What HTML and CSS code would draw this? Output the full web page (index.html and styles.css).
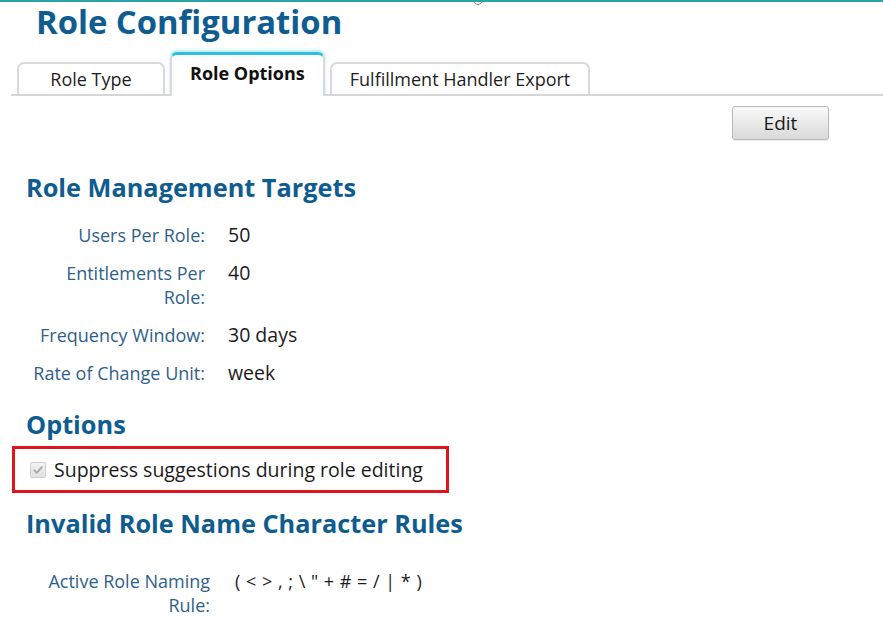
FILE: index.html
```html
<!DOCTYPE html>
<html lang="en">
<head>
<meta charset="utf-8">
<title>Role Configuration</title>
<link rel="stylesheet" href="styles.css">
</head>
<body>
<div class="page">
  <span class="top-knob"></span>
  <h1 class="title">Role Configuration</h1>

  <div class="tabs">
    <div class="tab">Role Type</div>
    <div class="tab tab-active">Role Options</div>
    <div class="tab">Fulfillment Handler Export</div>
  </div>

  <div class="actions">
    <button class="btn" type="button">Edit</button>
  </div>

  <h2 class="section-title">Role Management Targets</h2>
  <div class="props">
    <div class="prop-label">Users Per Role:</div>
    <div class="prop-value">50</div>
    <div class="prop-label">Entitlements Per Role:</div>
    <div class="prop-value">40</div>
    <div class="prop-label">Frequency Window:</div>
    <div class="prop-value">30 days</div>
    <div class="prop-label">Rate of Change Unit:</div>
    <div class="prop-value">week</div>
  </div>

  <h2 class="section-title section-options">Options</h2>
  <div class="highlight">
    <label class="check-row">
      <span class="checkbox" aria-hidden="true">
        <svg width="12" height="12" viewBox="0 0 12 12"><path d="M2.3 6.4 L4.8 8.9 L9.8 3.2" fill="none" stroke="#a9a9a9" stroke-width="2" stroke-linecap="round" stroke-linejoin="round"/></svg>
      </span>
      <span class="check-text">Suppress suggestions during role editing</span>
    </label>
  </div>

  <h2 class="section-title section-invalid">Invalid Role Name Character Rules</h2>
  <div class="props props-rules">
    <div class="prop-label">Active Role Naming Rule:</div>
    <div class="prop-value rule-value">( &lt; &gt; , ; \ " + # = / | * )</div>
  </div>
</div>
</body>
</html>
```

FILE: styles.css
```css
html, body {
  margin: 0;
  padding: 0;
  background: #ffffff;
}

body {
  font-family: "Open Sans", "Noto Sans", "DejaVu Sans", sans-serif;
  color: #1b1b1b;
  border-top: 2px solid #2aa3a6;
}

.page {
  position: relative;
  width: 883px;
}

.top-knob {
  position: absolute;
  left: 473px;
  top: -7px;
  width: 8px;
  height: 8px;
  border: 1.5px solid #8a8a8a;
  border-radius: 50%;
  background: transparent;
}

.title {
  margin: 0;
  padding-left: 36px;
  font-size: 32.8px;
  line-height: 40px;
  font-weight: 700;
  color: #0f5c90;
}

.tabs {
  display: flex;
  align-items: flex-end;
  gap: 5px;
  margin: 10px 0 0 11px;
  padding-left: 6px;
  height: 42px;
  border-bottom: 2px solid #d6d6d6;
}

.tab {
  box-sizing: border-box;
  height: 32px;
  min-width: 148px;
  padding: 0 18px;
  display: flex;
  align-items: center;
  justify-content: center;
  font-size: 18px;
  color: #1e1e1e;
  background: #ffffff;
  border: 2px solid #d9d9d9;
  border-bottom: none;
  border-radius: 7px 7px 0 0;
}

.tab-active {
  height: 44px;
  margin-bottom: -2px;
  padding-bottom: 6px;
  font-weight: 700;
  color: #111111;
  border-top: 3px solid #2fc1dc;
  box-shadow: 0 -2px 3px rgba(47, 193, 220, 0.35);
}

.actions {
  display: flex;
  justify-content: flex-end;
  padding-right: 54px;
  margin-top: 10px;
}

.btn {
  width: 97px;
  height: 34px;
  font-family: inherit;
  font-size: 19px;
  color: #1a1a1a;
  background: linear-gradient(#fafafa, #d9d9d9);
  border: 1px solid #b9b9b9;
  border-radius: 3px;
  box-shadow: 0 1px 1px rgba(0, 0, 0, 0.08);
  padding: 0;
}

.section-title {
  margin: 0;
  padding-left: 26px;
  font-size: 25.3px;
  line-height: 32px;
  font-weight: 700;
  color: #0f5c90;
}

.actions + .section-title {
  margin-top: 31px;
}

.props {
  display: grid;
  grid-template-columns: 179px auto;
  column-gap: 23px;
  margin-top: 13px;
  padding-left: 26px;
}

.prop-label,
.prop-value {
  padding: 7px 0;
  font-size: 18px;
  line-height: 24px;
}

.prop-label {
  text-align: right;
  color: #2f5f8c;
}

.prop-value {
  color: #1b1b1b;
  font-size: 19.5px;
}

.section-options {
  margin-top: 16px;
}

.highlight {
  box-sizing: border-box;
  width: 437px;
  margin: 6px 0 0 12px;
  border: 3px solid #e2141b;
  padding: 8px 15px;
}

.check-row {
  display: flex;
  align-items: center;
  gap: 8px;
  line-height: 25px;
}

.checkbox {
  box-sizing: border-box;
  width: 16px;
  height: 16px;
  display: inline-flex;
  align-items: center;
  justify-content: center;
  border: 1px solid #cfcfcf;
  border-radius: 2px;
  background: linear-gradient(#f2f2f2, #e2e2e2);
}

.check-text {
  font-size: 19.5px;
  color: #1b1b1b;
}

.section-invalid {
  margin-top: 14px;
}

.props-rules {
  grid-template-columns: 184px auto;
  column-gap: 25px;
  margin-top: 23px;
}

.props-rules .rule-value {
  font-size: 18px;
  word-spacing: 1px;
}
```
